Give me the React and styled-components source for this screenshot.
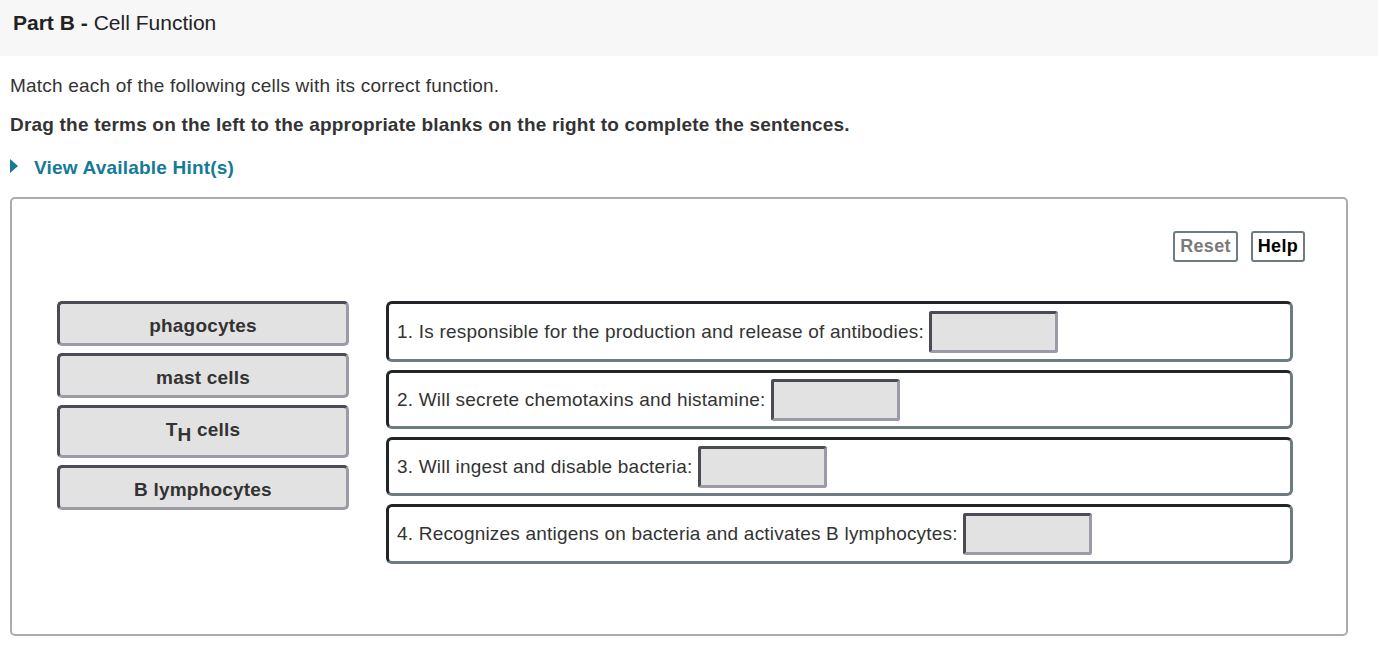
import React from "react";
import styled, { createGlobalStyle } from "styled-components";

const GlobalStyle = createGlobalStyle`
  body {
    margin: 0;
    background: #fff;
    font-family: "Liberation Sans", Arial, sans-serif;
    color: #333;
  }
`;

const Header = styled.div`
  height: 56px;
  background: #f7f7f7;
  padding-left: 13px;
  display: flex;
  align-items: center;
  font-size: 21px;
  color: #222;
  box-sizing: border-box;
  padding-bottom: 10px;

  b {
    font-weight: bold;
    margin-right: 6px;
  }
`;

const Body = styled.div`
  padding: 0 10px;
`;

const Intro = styled.p`
  margin: 20px 0 0;
  font-size: 19px;
  letter-spacing: 0.2px;
  line-height: 19px;
  color: #333;
`;

const Bold = styled.p`
  margin: 20px 0 0;
  font-size: 19px;
  letter-spacing: 0.2px;
  line-height: 19px;
  font-weight: bold;
  color: #333;
`;

const Hint = styled.div`
  margin-top: 24px;
  display: flex;
  align-items: center;
  gap: 16px;
  font-size: 19px;
  letter-spacing: 0.2px;
  line-height: 20px;
  font-weight: bold;
  color: #137a98;
`;

const Arrow = styled.span`
  width: 0;
  height: 0;
  border-top: 7px solid transparent;
  border-bottom: 7px solid transparent;
  border-left: 8px solid #137a98;
  margin-bottom: 5px;
`;

const Panel = styled.div`
  margin-top: 19px;
  width: 1338px;
  height: 439px;
  box-sizing: border-box;
  border: 2px solid #acacac;
  border-radius: 5px;
  padding: 32px 41px 0 45px;
`;

const Toolbar = styled.div`
  display: flex;
  justify-content: flex-end;
  gap: 13px;
`;

const ToolButton = styled.button`
  height: 31px;
  padding: 0 5px;
  background: #fff;
  border: 2px solid #6e7b80;
  border-radius: 3px;
  font-family: "Liberation Sans", Arial, sans-serif;
  font-size: 18px;
  letter-spacing: 0.3px;
  font-weight: bold;
  color: ${(p) => (p.$muted ? "#7a7a7a" : "#000")};
`;

const Workspace = styled.div`
  margin-top: 39px;
  display: flex;
  gap: 37px;
  padding-right: 12px;
`;

const Terms = styled.div`
  width: 292px;
  display: flex;
  flex-direction: column;
  gap: 7px;
`;

const Term = styled.div`
  box-sizing: border-box;
  height: ${(p) => p.$h || 45}px;
  background: #e2e2e2;
  border: 3px solid;
  border-color: #4b4b55 #9a9aa8 #9a9aa8 #4b4b55;
  border-radius: 5px;
  text-align: center;
  font-size: 19px;
  letter-spacing: 0.2px;
  font-weight: bold;
  color: #333;
  padding-top: 12px;
  line-height: 20px;

  sub {
    font-size: 19px;
    vertical-align: -5px;
    line-height: 0;
  }
`;

const Sentences = styled.div`
  flex: 1;
  display: flex;
  flex-direction: column;
  gap: 8px;
`;

const Sentence = styled.div`
  box-sizing: border-box;
  height: ${(p) => p.$h || 60}px;
  border: 3px solid;
  border-color: #222528 #6e7b80 #6e7b80 #222528;
  border-radius: 6px;
  display: flex;
  align-items: center;
  padding: 0 8px;
  font-size: 19px;
  letter-spacing: 0.2px;
  color: #333;
`;

const Blank = styled.span`
  display: inline-block;
  box-sizing: border-box;
  width: 129px;
  height: 42px;
  margin-left: 5px;
  background: #e2e2e2;
  border: 3px solid;
  border-color: #4b4b55 #9a9aa8 #9a9aa8 #4b4b55;
  border-radius: 3px;
`;

const sentences = [
  { text: "1. Is responsible for the production and release of antibodies:", h: 61 },
  { text: "2. Will secrete chemotaxins and histamine:", h: 59 },
  { text: "3. Will ingest and disable bacteria:", h: 59 },
  { text: "4. Recognizes antigens on bacteria and activates B lymphocytes:", h: 60 },
];

export default function App() {
  return (
    <>
      <GlobalStyle />
      <Header>
        <b>Part B -</b> Cell Function
      </Header>
      <Body>
        <Intro>Match each of the following cells with its correct function.</Intro>
        <Bold>Drag the terms on the left to the appropriate blanks on the right to complete the sentences.</Bold>
        <Hint>
          <Arrow />
          View Available Hint(s)
        </Hint>
        <Panel>
          <Toolbar>
            <ToolButton $muted>Reset</ToolButton>
            <ToolButton>Help</ToolButton>
          </Toolbar>
          <Workspace>
            <Terms>
              <Term>phagocytes</Term>
              <Term>mast cells</Term>
              <Term $h={53}>
                T<sub>H</sub> cells
              </Term>
              <Term>B lymphocytes</Term>
            </Terms>
            <Sentences>
              {sentences.map((s, i) => (
                <Sentence key={i} $h={s.h}>
                  {s.text}
                  <Blank />
                </Sentence>
              ))}
            </Sentences>
          </Workspace>
        </Panel>
      </Body>
    </>
  );
}
